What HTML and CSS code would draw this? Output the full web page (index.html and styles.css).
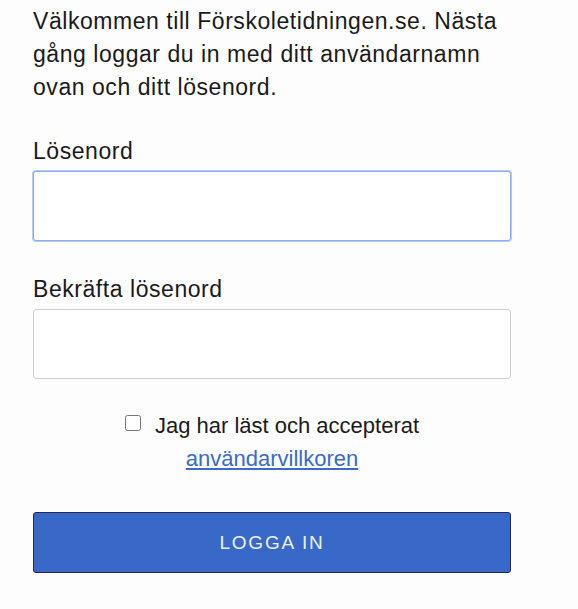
FILE: index.html
```html
<!DOCTYPE html>
<html lang="sv">
<head>
<meta charset="utf-8">
<title>Förskoletidningen</title>
<link rel="stylesheet" href="styles.css">
</head>
<body>
<form class="form">
  <p class="intro">Välkommen till Förskoletidningen.se. Nästa gång loggar du in med ditt användarnamn ovan och ditt lösenord.</p>
  <label class="label" for="pw">Lösenord</label>
  <input class="field field-focus" id="pw" type="password" autofocus>
  <label class="label label-second" for="pw2">Bekräfta lösenord</label>
  <input class="field" id="pw2" type="password">
  <div class="terms">
    <div class="terms-line"><input class="check" type="checkbox" id="terms"><label for="terms">Jag har läst och accepterat</label></div>
    <div class="terms-line"><a class="link" href="#">användarvillkoren</a></div>
  </div>
  <button class="btn" type="button">LOGGA IN</button>
</form>
</body>
</html>
```
FILE: styles.css
```css
html, body {
  margin: 0;
  padding: 0;
  background: #fdfdfd;
}
body {
  font-family: "Liberation Sans", Arial, sans-serif;
  color: #1a1a1a;
}
.form {
  width: 478px;
  padding: 5px 0 0 33px;
  display: flex;
  flex-direction: column;
}
.intro {
  margin: 0;
  font-size: 23px;
  letter-spacing: 0.55px;
  line-height: 33px;
}
.label {
  display: block;
  font-size: 23px;
  letter-spacing: 0.55px;
  line-height: 30px;
  margin-top: 32px;
  margin-bottom: 5px;
}
.label-second {
  margin-top: 33px;
}
.field {
  box-sizing: border-box;
  width: 478px;
  height: 70px;
  margin: 0;
  padding: 0 16px;
  font-size: 20px;
  font-family: inherit;
  background: #fff;
  border: 1px solid #cfcfcf;
  border-radius: 3px;
  outline: none;
}
.field-focus,
.field:focus {
  border: 1px solid #8aaaf0;
  box-shadow: 0 0 0 1px #b7ccf5;
}
.terms {
  margin-top: 30px;
  text-align: center;
  font-size: 22px;
  line-height: 33px;
  color: #1a1a1a;
}
.terms-line {
  white-space: nowrap;
}
.check {
  width: 16px;
  height: 16px;
  margin: 0 14px 0 0;
  vertical-align: middle;
  position: relative;
  top: -4px;
}
.link {
  color: #3a6bc6;
  text-decoration: underline;
}
.btn {
  margin-top: 37px;
  box-sizing: border-box;
  width: 478px;
  height: 61px;
  background: #3868c8;
  border: 1px solid #25284a;
  border-radius: 3px;
  color: #eef2fb;
  font-family: inherit;
  font-size: 19px;
  letter-spacing: 1.8px;
  cursor: pointer;
}
```
